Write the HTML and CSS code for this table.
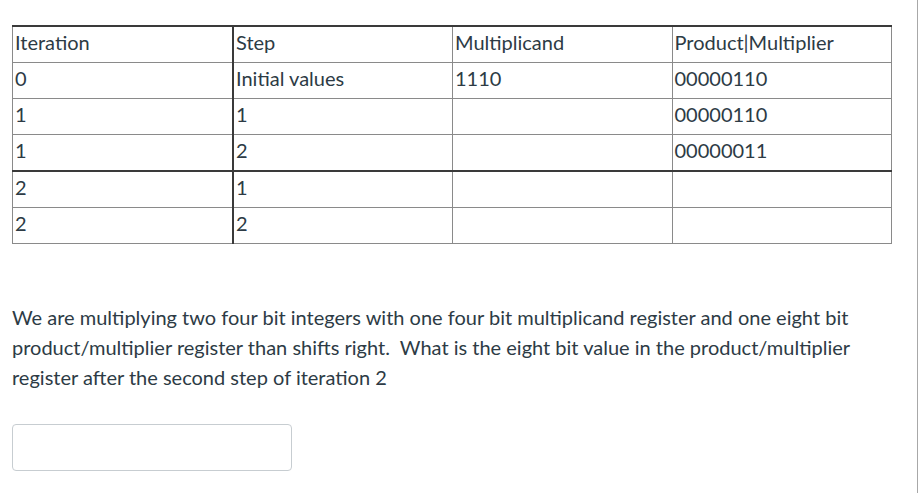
FILE: index.html
```html
<!DOCTYPE html>
<html>
<head>
<meta charset="utf-8">
<link rel="stylesheet" href="styles.css">
</head>
<body>
<div class="page">
  <table class="grid">
    <tr class="head">
      <td class="c1">Iteration</td><td class="c2">Step</td><td>Multiplicand</td><td>Product|Multiplier</td>
    </tr>
    <tr><td class="c1">0</td><td class="c2">Initial values</td><td>1110</td><td>00000110</td></tr>
    <tr><td class="c1">1</td><td class="c2">1</td><td></td><td>00000110</td></tr>
    <tr class="sep"><td class="c1">1</td><td class="c2">2</td><td></td><td>00000011</td></tr>
    <tr><td class="c1">2</td><td class="c2">1</td><td></td><td></td></tr>
    <tr><td class="c1">2</td><td class="c2">2</td><td></td><td></td></tr>
  </table>
  <p class="question">We are multiplying two four bit integers with one four bit multiplicand register and one eight bit product/multiplier register than shifts right.&nbsp; What is the eight bit value in the product/multiplier register after the second step of iteration 2</p>
  <div class="answer"></div>
</div>
</body>
</html>
```
FILE: styles.css
```css
html, body {
  margin: 0;
  padding: 0;
  background: #fff;
}
body {
  font-family: Lato, "Open Sans", sans-serif;
  color: #2d3b45;
  font-size: 20px;
}
.page {
  width: 918px;
  height: 493px;
  box-sizing: border-box;
  padding: 25px 0 0 12px;
  border-right: 1px solid #a8a8a8;
}
.grid {
  border-collapse: collapse;
  width: 880px;
  table-layout: fixed;
}
.grid td {
  border: 1px solid #8a8a8a;
  height: 30px;
  padding: 0 2px 5px 2px;
  vertical-align: middle;
  line-height: 24px;
}
.grid .head td {
  border-top: 2px solid #3a3a3a;
}
.grid td.c1 {
  width: 215px;
}
.grid td.c2 {
  border-left: 2px solid #3a3a3a;
}
.grid .sep td {
  border-bottom: 2px solid #3a3a3a;
}
.question {
  margin: 58px 0 0 0;
  width: 860px;
  line-height: 30px;
}
.answer {
  margin-top: 32px;
  width: 278px;
  height: 45px;
  border: 1px solid #c7cdd1;
  border-radius: 4px;
}
```
